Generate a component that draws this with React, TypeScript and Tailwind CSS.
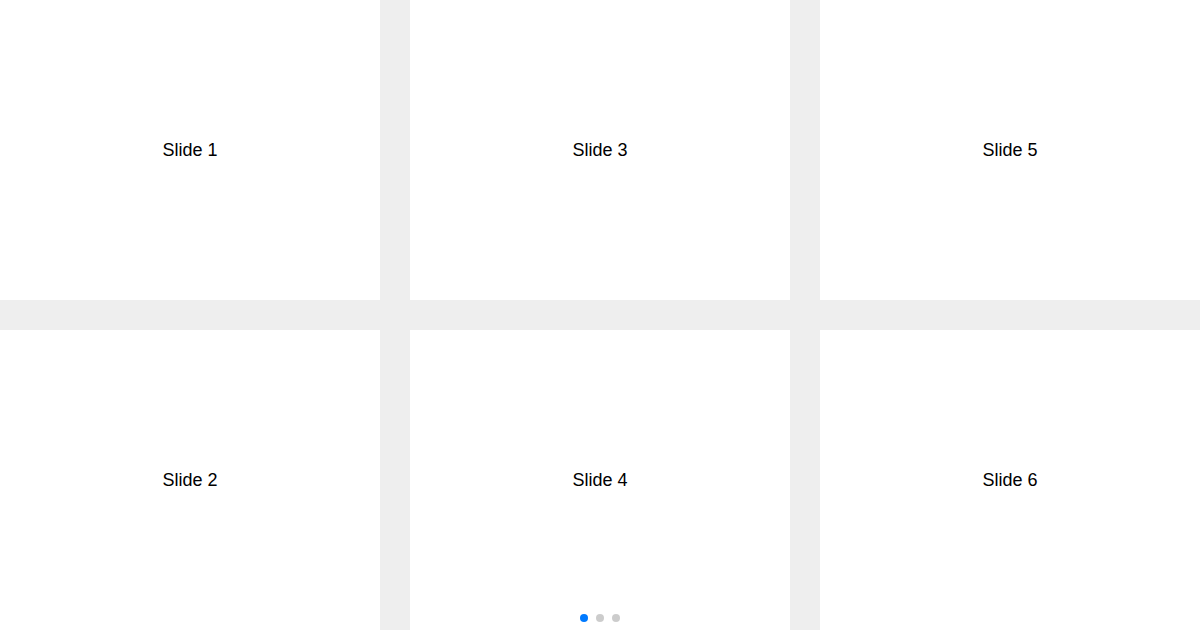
import React from "react";

export default function App() {
  const slides = [1, 3, 5, 2, 4, 6];
  return (
    <div
      className="relative w-[1200px] h-[630px] bg-[#eeeeee] overflow-hidden"
      style={{ fontFamily: '"Liberation Sans", Arial, Helvetica, sans-serif' }}
    >
      <div className="grid grid-cols-3 grid-rows-2 gap-[30px] w-full h-full">
        {slides.map((n) => (
          <div
            key={n}
            className="bg-white flex items-center justify-center text-[18px] text-black"
          >
            Slide {n}
          </div>
        ))}
      </div>
      <div className="absolute bottom-[8px] left-0 right-0 flex justify-center gap-[8px]">
        <span className="w-[8px] h-[8px] rounded-full bg-[#007aff]" />
        <span className="w-[8px] h-[8px] rounded-full bg-black opacity-20" />
        <span className="w-[8px] h-[8px] rounded-full bg-black opacity-20" />
      </div>
    </div>
  );
}
